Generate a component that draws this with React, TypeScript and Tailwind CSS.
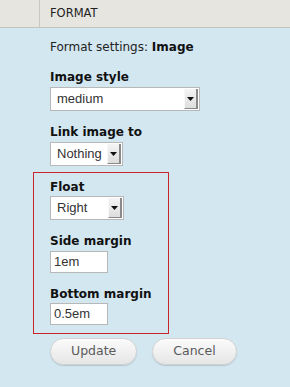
import React from 'react';

const label = "font-['DejaVu_Sans',sans-serif] text-[12px] leading-[16px] font-bold text-[#111]";

function FakeSelect({ value, width }: { value: string; width: string }) {
  return (
    <div
      className={`${width} h-[24px] flex items-center justify-between bg-white border border-[#b8b8b8] pl-[6px] pr-[1px]`}
    >
      <span className="font-['Liberation_Sans',Arial,sans-serif] text-[13px] text-[#333]">{value}</span>
      <span className="w-[14px] h-[20px] flex items-center justify-center bg-gradient-to-b from-[#f4f4f4] to-[#dedede] border-r-2 border-b border-[#8a8a8a] border-l border-l-[#f8f8f8]">
        <svg width="7" height="4" viewBox="0 0 7 4">
          <path d="M0 0 H7 L3.5 4 Z" fill="#111" />
        </svg>
      </span>
    </div>
  );
}

function FakeInput({ value }: { value: string }) {
  return (
    <div className="w-[58px] h-[22px] flex items-center bg-white border border-[#b8b8b8] pl-[3px] font-['Liberation_Sans',Arial,sans-serif] text-[13px] text-[#333]">
      {value}
    </div>
  );
}

function Pill({ children }: { children: React.ReactNode }) {
  return (
    <button className="h-[27px] px-[20px] rounded-full border border-[#d2d2d2] bg-gradient-to-b from-[#fbfbfb] to-[#e6e6e6] shadow-[0_1px_1px_rgba(0,0,0,0.15)] font-['DejaVu_Sans',sans-serif] text-[12.5px] text-[#5a5a5a]">
      {children}
    </button>
  );
}

export default function App() {
  return (
    <div className="w-[290px] h-[387px] bg-[#d3e7f1] overflow-hidden">
      {/* Header */}
      <div className="h-[28px] flex bg-[#e6e5e0] border-b border-[#c4c4c0]">
        <div className="w-[40px] border-r border-[#c8c8c4]" />
        <div className="pl-[10px] flex items-center font-['DejaVu_Sans',sans-serif] text-[11.5px] text-[#222]">FORMAT</div>
      </div>

      <div className="pl-[50px] pt-[11px]">
        <div className="font-['DejaVu_Sans',sans-serif] text-[12px] leading-[16px] text-[#222]">
          Format settings: <span className="font-bold text-[#111]">Image</span>
        </div>

        <div className={`${label} mt-[14px]`}>Image style</div>
        <div className="mt-[2px]">
          <FakeSelect value="medium" width="w-[150px]" />
        </div>

        <div className={`${label} mt-[13px]`}>Link image to</div>
        <div className="mt-[2px]">
          <FakeSelect value="Nothing" width="w-[73px]" />
        </div>
      </div>

      {/* Highlighted group */}
      <div className="ml-[33px] mt-[6px] w-[136px] border border-[#c8242a] pl-[16px] pt-[6px] pb-[8px]">
        <div className={label}>Float</div>
        <div className="mt-[1px]">
          <FakeSelect value="Right" width="w-[74px]" />
        </div>

        <div className={`${label} mt-[13px]`}>Side margin</div>
        <div className="mt-[2px]">
          <FakeInput value="1em" />
        </div>

        <div className={`${label} mt-[13px]`}>Bottom margin</div>
        <div className="mt-[1px]">
          <FakeInput value="0.5em" />
        </div>
      </div>

      <div className="pl-[50px] mt-[4px] flex gap-[15px]">
        <Pill>Update</Pill>
        <Pill>Cancel</Pill>
      </div>
    </div>
  );
}
